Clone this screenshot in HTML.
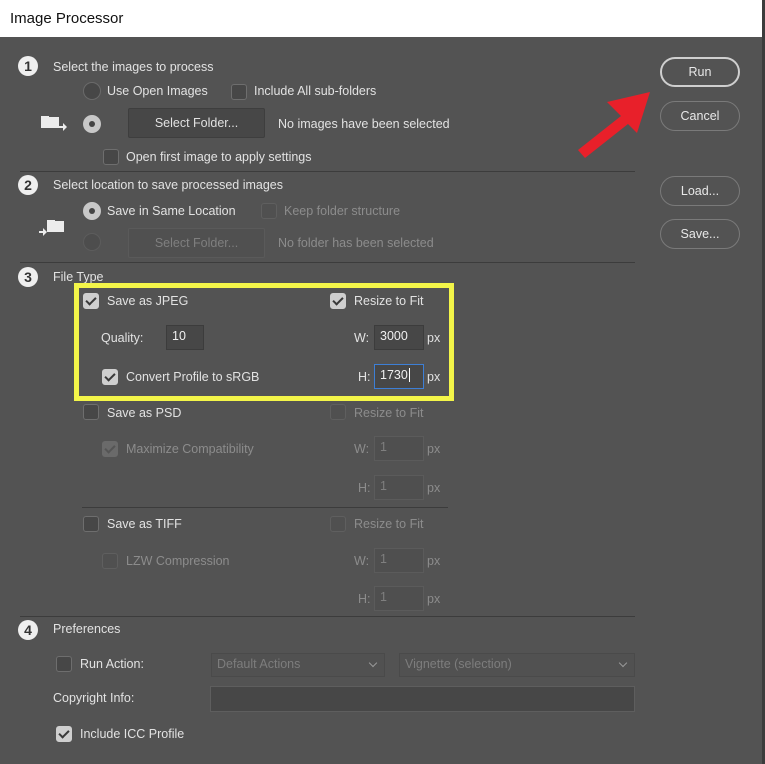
<!DOCTYPE html>
<html><head><meta charset="utf-8"><style>
*{box-sizing:border-box;margin:0;padding:0}
body{width:765px;height:764px;overflow:hidden;background:#535353;font-family:"Liberation Sans",sans-serif;font-size:12.5px;color:#e2e2e2;position:relative}
.a{position:absolute;white-space:nowrap}
.t{line-height:16px;transform:translateY(-8px)}
.d{color:#8c8c8c}
.title{left:0;top:0;width:765px;height:37px;background:#fff;color:#111;font-size:15px;padding:10px 0 0 10px}
.rb{position:absolute;right:0;top:0;width:3px;height:764px;background:#3c3c3c}
.num{width:20px;height:20px;border-radius:50%;background:#efefef;color:#333;font-weight:bold;font-size:14px;text-align:center;line-height:20px}
.cb{width:16px;height:16px;border:1px solid #6e6e6e;border-radius:3px;background:#474747}
.cb.on{background:#cfcfcf;border-color:#cfcfcf}
.cb.on::after{content:"";position:absolute;left:4px;top:1px;width:4px;height:8px;border:solid #3a3a3a;border-width:0 2px 2px 0;transform:rotate(45deg)}
.cb.dis{border-color:#5f5f5f;background:#505050}
.cb.on.dis{background:#6a6a6a;border-color:#6a6a6a}
.cb.on.dis::after{border-color:#555}
.rd{width:18px;height:18px;border-radius:50%;border:1px solid #6a6a6a;background:#474747}
.rd.on{background:#c8c8c8;border-color:#c8c8c8}
.rd.on::after{content:"";position:absolute;left:5px;top:5px;width:6px;height:6px;border-radius:50%;background:#444}
.rd.dis{background:#4d4d4d;border-color:#5c5c5c}
.btn{border:1px solid #3e3e3e;background:#474747;text-align:center;line-height:28px;border-radius:2px}
.btn.dis{background:#505050;border-color:#5a5a5a;color:#7f7f7f}
.inp{background:#474747;border:1px solid #3c3c3c;padding:3px 0 0 5px;color:#f0f0f0}
.inp.dis{background:#4f4f4f;border-color:#5b5b5b;color:#7f7f7f}
.line{height:1px;background:#3c3c3c}
.pill{width:80px;height:30px;border-radius:15px;border:1px solid #7a7a7a;text-align:center;line-height:28px;color:#e8e8e8}
.dd{border:1px solid #4a4a4a;background:#515151;color:#7d7d7d;padding:3px 0 0 5px;height:24px}
.dd::after{content:"";position:absolute;right:8px;top:6px;width:5px;height:5px;border:solid #999;border-width:0 1.5px 1.5px 0;transform:rotate(45deg)}
</style></head><body>
<div class="a title">Image Processor</div>
<div class="rb"></div>

<div class="a num" style="left:18px;top:56px">1</div>
<div class="a t" style="left:53px;top:67px">Select the images to process</div>
<div class="a rd" style="left:83px;top:82px"></div>
<div class="a t" style="left:107px;top:91px">Use Open Images</div>
<div class="a cb" style="left:231px;top:84px"></div>
<div class="a t" style="left:254px;top:91px">Include All sub-folders</div>
<svg class="a" style="left:40px;top:114px" width="28" height="20"><path d="M1 2h8v1h10v11H1z" fill="#ececec"/><path d="M19 12h4v-3l4 4-4 4v-3h-4z" fill="#ececec"/></svg>
<div class="a rd on" style="left:83px;top:115px"></div>
<div class="a btn" style="left:128px;top:108px;width:137px;height:30px">Select Folder...</div>
<div class="a t" style="left:278px;top:124px">No images have been selected</div>
<div class="a cb" style="left:103px;top:149px"></div>
<div class="a t" style="left:126px;top:157px">Open first image to apply settings</div>
<div class="a line" style="left:20px;top:171px;width:615px"></div>

<div class="a num" style="left:18px;top:175px">2</div>
<div class="a t" style="left:53px;top:185px">Select location to save processed images</div>
<div class="a rd on" style="left:83px;top:202px"></div>
<div class="a t" style="left:107px;top:211px">Save in Same Location</div>
<div class="a cb dis" style="left:261px;top:203px"></div>
<div class="a t d" style="left:284px;top:211px">Keep folder structure</div>
<svg class="a" style="left:38px;top:219px" width="28" height="20"><path d="M9 1h8v1h9v11H9z" fill="#ececec"/><path d="M1 12h4v-3l4 4-4 4v-3H1z" fill="#ececec"/></svg>
<div class="a rd dis" style="left:83px;top:233px"></div>
<div class="a btn dis" style="left:128px;top:228px;width:137px;height:30px">Select Folder...</div>
<div class="a t d" style="left:278px;top:243px">No folder has been selected</div>
<div class="a line" style="left:20px;top:262px;width:615px"></div>

<div class="a num" style="left:18px;top:267px">3</div>
<div class="a t" style="left:53px;top:277px">File Type</div>
<div class="a" style="left:74px;top:283px;width:380px;height:118px;border:5px solid #f3f549"></div>
<div class="a cb on" style="left:83px;top:293px"></div>
<div class="a t" style="left:107px;top:301px">Save as JPEG</div>
<div class="a cb on" style="left:330px;top:293px"></div>
<div class="a t" style="left:354px;top:301px">Resize to Fit</div>
<div class="a t" style="left:101px;top:338px">Quality:</div>
<div class="a inp" style="left:166px;top:325px;width:38px;height:25px">10</div>
<div class="a t" style="left:354px;top:338px">W:</div>
<div class="a inp" style="left:374px;top:325px;width:50px;height:25px">3000</div>
<div class="a t" style="left:427px;top:338px">px</div>
<div class="a cb on" style="left:102px;top:369px"></div>
<div class="a t" style="left:126px;top:377px">Convert Profile to sRGB</div>
<div class="a t" style="left:358px;top:377px">H:</div>
<div class="a inp" style="left:374px;top:364px;width:50px;height:25px;border-color:#3d7fd6">1730<span style="border-left:1px solid #fff;margin-left:1px"></span></div>
<div class="a t" style="left:427px;top:377px">px</div>

<div class="a cb" style="left:83px;top:404px"></div>
<div class="a t" style="left:107px;top:413px">Save as PSD</div>
<div class="a cb dis" style="left:330px;top:404px"></div>
<div class="a t d" style="left:354px;top:413px">Resize to Fit</div>
<div class="a cb on dis" style="left:102px;top:441px"></div>
<div class="a t d" style="left:126px;top:449px">Maximize Compatibility</div>
<div class="a t d" style="left:354px;top:449px">W:</div>
<div class="a inp dis" style="left:374px;top:436px;width:50px;height:25px">1</div>
<div class="a t d" style="left:427px;top:449px">px</div>
<div class="a t d" style="left:358px;top:488px">H:</div>
<div class="a inp dis" style="left:374px;top:475px;width:50px;height:25px">1</div>
<div class="a t d" style="left:427px;top:488px">px</div>
<div class="a line" style="left:82px;top:507px;width:366px"></div>

<div class="a cb" style="left:83px;top:516px"></div>
<div class="a t" style="left:107px;top:524px">Save as TIFF</div>
<div class="a cb dis" style="left:330px;top:516px"></div>
<div class="a t d" style="left:354px;top:524px">Resize to Fit</div>
<div class="a cb dis" style="left:102px;top:553px"></div>
<div class="a t d" style="left:126px;top:561px">LZW Compression</div>
<div class="a t d" style="left:354px;top:561px">W:</div>
<div class="a inp dis" style="left:374px;top:548px;width:50px;height:25px">1</div>
<div class="a t d" style="left:427px;top:561px">px</div>
<div class="a t d" style="left:358px;top:599px">H:</div>
<div class="a inp dis" style="left:374px;top:586px;width:50px;height:25px">1</div>
<div class="a t d" style="left:427px;top:599px">px</div>
<div class="a line" style="left:20px;top:616px;width:615px"></div>

<div class="a num" style="left:18px;top:620px">4</div>
<div class="a t" style="left:53px;top:629px">Preferences</div>
<div class="a cb" style="left:56px;top:656px"></div>
<div class="a t" style="left:80px;top:664px">Run Action:</div>
<div class="a dd" style="left:211px;top:653px;width:174px">Default Actions</div>
<div class="a dd" style="left:399px;top:653px;width:236px">Vignette (selection)</div>
<div class="a t" style="left:53px;top:698px">Copyright Info:</div>
<div class="a" style="left:210px;top:686px;width:425px;height:26px;background:#474747;border:1px solid #5e5e5e"></div>
<div class="a cb on" style="left:56px;top:726px"></div>
<div class="a t" style="left:80px;top:734px">Include ICC Profile</div>

<div class="a pill" style="left:660px;top:57px;border:2px solid #cfcfcf;line-height:26px">Run</div>
<div class="a pill" style="left:660px;top:101px">Cancel</div>
<div class="a pill" style="left:660px;top:176px">Load...</div>
<div class="a pill" style="left:660px;top:219px">Save...</div>
<svg class="a" style="left:570px;top:85px" width="90" height="80"><polygon points="80,7 67,48 58,39 15,73 8,65 51,31 37,17" fill="#e8202a"/></svg>
</body></html>
